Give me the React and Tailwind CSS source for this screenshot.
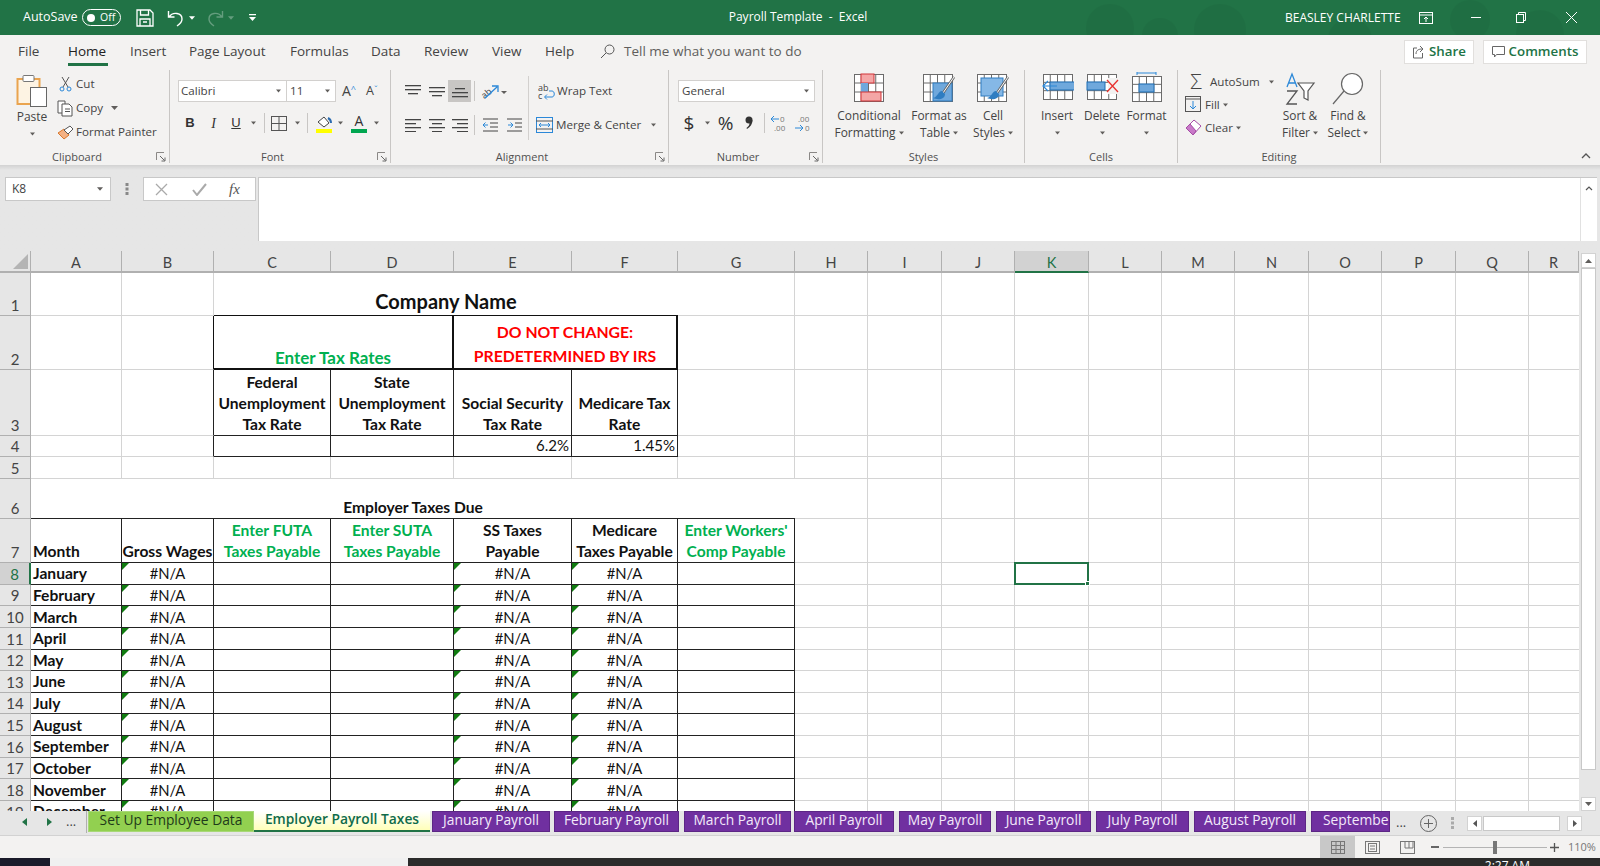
import React from "react";

const Caret = ({ c = "#605e5c", w = 7 }) => (
  <svg width={w} height="4" viewBox="0 0 7 4" className="shrink-0"><path d="M0 0h7L3.5 4z" fill={c} /></svg>
);

const Launcher = () => (
  <svg width="10" height="10" viewBox="0 0 10 10" className="absolute right-[3px] top-[1px]">
    <path d="M.5 8V.5H8" fill="none" stroke="#8a8886" />
    <path d="M4 4l4.5 4.5M9 5.5V9H5.5" fill="none" stroke="#666" />
  </svg>
);

const Lines = ({ rows, color = "#444" }) => (
  <svg width="16" height="14" viewBox="0 0 16 14">
    {rows.map((r, i) => (
      <rect key={i} x={r[0]} y={r[1]} width={r[2]} height="1.3" fill={color} />
    ))}
  </svg>
);

const TableIcon = ({ children, w = 32, h = 26 }) => (
  <svg width={w} height={h + 8} viewBox={`0 0 ${w} ${h + 8}`}>
    <g transform="translate(1 6)">
      {children}
    </g>
  </svg>
);
const GridLines = ({ w = 28, h = 22 }) => (
  <g stroke="#6b6b6b" strokeWidth="1" fill="none">
    <rect x=".5" y=".5" width={w} height={h} fill="#fff" />
    <path d={`M${w * 0.25} 0v${h}M${w * 0.5} 0v${h}M${w * 0.75} 0v${h}M0 ${h / 3}h${w}M0 ${(2 * h) / 3}h${w}`} />
  </g>
);
const Brush = () => (
  <g>
    <path d="M31 3L20 19" stroke="#666" strokeWidth="2.6" />
    <path d="M31 3L20 19" stroke="#fff" strokeWidth="1" />
    <path d="M19 17c-4 0-4 6-9 7 4 2 12 2 12-4z" fill="#2f7dc1" />
  </g>
);

const Group = ({ w, label, launcher, children }) => (
  <div className={`${w} flex h-[93px] shrink-0 flex-col border-r border-[#c8c6c4]`}>
    <div className="flex min-h-0 flex-1">{children}</div>
    <div className={`relative h-[12px] text-center text-[11px] leading-[12px] text-[#505050] ${launcher ? "pr-[15px]" : ""}`}>
      {label}
      {launcher && <Launcher />}
    </div>
  </div>
);

const SmallBtn = ({ icon, text, caret }) => (
  <div className="flex h-[24px] items-center whitespace-nowrap">
    <span className="flex w-[18px] justify-center">{icon}</span>
    <span className="ml-[2px]">{text}</span>
    {caret && <span className="ml-[8px]"><Caret /></span>}
  </div>
);

const BigBtn = ({ w, icon, l1, l2 }) => (
  <div className={`${w} flex shrink-0 flex-col items-center whitespace-nowrap text-[11.9px] leading-[17px]`}>
    <div className="mt-[2px] flex h-[34px] items-center justify-center">{icon}</div>
    <div className="mt-[1px]">{l1}</div>
    <div className="flex h-[17px] items-center gap-[3px]">
      {l2 && <span>{l2}</span>}
      <Caret w={5} />
    </div>
  </div>
);

const IconCell = ({ w, children }) => (
  <div className={`${w} flex h-[22px] shrink-0 items-center justify-center`}>{children}</div>
);
const VSep = ({ w }) => (
  <div className={`${w} flex h-[22px] shrink-0 items-center justify-center`}>
    <div className="h-[20px] w-px bg-[#c8c6c4]" />
  </div>
);

const Tab = ({ label, w, cls }) => (
  <div className={`${w} flex h-[21px] shrink-0 items-center justify-center overflow-hidden whitespace-nowrap pb-[2px] text-[13.8px] ${cls}`}>
    {label}
  </div>
);
const Purple = ({ label, w, ml = "ml-[4px]" }) => (
  <Tab label={label} w={`${w} ${ml}`} cls="bg-[#7030a0] text-[#f3e9fa] border border-[#5c2685]" />
);

const TitleBar = () => (
  <div className="relative flex h-[35px] shrink-0 items-center overflow-hidden bg-[#217346] text-[12px] text-white">
    <svg className="absolute left-[1050px] top-0" width="550" height="35" viewBox="0 0 550 35">
      <g fill="#000" opacity=".035">
        <circle cx="60" cy="28" r="24" /><circle cx="110" cy="36" r="18" /><circle cx="170" cy="30" r="26" />
        <circle cx="300" cy="40" r="22" /><circle cx="420" cy="20" r="20" /><circle cx="490" cy="34" r="24" />
      </g>
    </svg>
    <div className="relative flex w-[700px] shrink-0 items-center pl-[23px]">
      <span className="w-[59px] text-[12.5px]">AutoSave</span>
      <div className="flex h-[17px] w-[39px] items-center rounded-full border border-white pl-[4px] text-[10.5px]">
        <span className="h-[8px] w-[8px] rounded-full bg-white" />
        <span className="ml-[5px]">Off</span>
      </div>
      <svg className="ml-[15px]" width="18" height="18" viewBox="0 0 18 18" fill="none" stroke="#fff" strokeWidth="1.3">
        <path d="M1 1h13l3 3v13H1z" /><path d="M4.5 1v5h8V1M4 17v-7h10v7M7 13h4" />
      </svg>
      <svg className="ml-[13px]" width="18" height="18" viewBox="0 0 18 18" fill="none" stroke="#fff" strokeWidth="1.4">
        <path d="M1.5 2v6h6M2 8c4-6 13-4 13 2 0 3-2 5-5 7" />
      </svg>
      <span className="ml-[4px]"><Caret c="#fff" w={6} /></span>
      <svg className="ml-[11px] opacity-30" width="18" height="18" viewBox="0 0 18 18" fill="none" stroke="#fff" strokeWidth="1.4">
        <path d="M16.5 2v6h-6M16 8C12 2 3 4 3 10c0 3 2 5 5 7" />
      </svg>
      <span className="ml-[4px] opacity-30"><Caret c="#fff" w={6} /></span>
      <svg className="ml-[15px]" width="7" height="7" viewBox="0 0 7 7" fill="#fff"><path d="M0 0h7v1.2H0zM0 3h7L3.5 7z" /></svg>
    </div>
    <div className="relative w-[194px] shrink-0 whitespace-pre pb-[2px] pl-[2px] text-center text-[12px]">Payroll Template  -  Excel</div>
    <div className="relative ml-[391px] w-[134px] shrink-0 whitespace-nowrap text-[12px]">BEASLEY CHARLETTE</div>
    <svg className="relative shrink-0" width="14" height="12" viewBox="0 0 14 12" fill="none" stroke="#fff">
      <rect x=".5" y=".5" width="13" height="11" /><path d="M0 3h14M7 10V5M5 7l2-2 2 2" />
    </svg>
    <div className="relative ml-[38px] h-px w-[10px] shrink-0 bg-white" />
    <svg className="relative ml-[35px] shrink-0" width="10" height="11" viewBox="0 0 10 11" fill="none" stroke="#fff">
      <rect x=".5" y="2.5" width="7" height="8" /><path d="M2.5 2V.5h7v8H8" />
    </svg>
    <svg className="relative ml-[40px] shrink-0" width="11" height="11" viewBox="0 0 11 11" stroke="#fff"><path d="M0 0l11 11M11 0L0 11" /></svg>
  </div>
);

const TabRow = () => {
  const items = [
    ["File", "w-[50px]"], ["Insert", "w-[59px]"], ["Page Layout", "w-[101px]"], ["Formulas", "w-[81px]"],
    ["Data", "w-[53px]"], ["Review", "w-[68px]"], ["View", "w-[53px]"], ["Help", "w-[55px]"],
  ];
  const Item = ([t, w]) => <div key={t} className={`${w} shrink-0`}>{t}</div>;
  return (
    <div className="flex h-[33px] shrink-0 items-center bg-[#f3f2f1] pl-[18px] text-[13.5px] text-[#444]">
      {Item(items[0])}
      <div className="relative w-[62px] shrink-0 font-medium text-[#222]">
        Home
        <div className="absolute left-0 top-[22px] h-[3px] w-[40px] bg-[#217346]" />
      </div>
      {items.slice(1).map(Item)}
      <svg className="mr-[9px] shrink-0" width="15" height="15" viewBox="0 0 15 15" fill="none" stroke="#555">
        <circle cx="9.5" cy="5.5" r="4.5" /><path d="M6 9l-5 5" />
      </svg>
      <div className="text-[#605e5c]">Tell me what you want to do</div>
      <div className="ml-auto flex h-[24px] w-[70px] items-center justify-center gap-[3px] border border-[#e1dfdd] bg-white text-[13.3px] font-semibold text-[#217346]">
        <svg width="14" height="14" viewBox="0 0 14 14" fill="none" stroke="#666"><path d="M5 3H1.5v10h9V8M4 9c0-4 3-5 6-5M8 1l3 3-3 3" /></svg>
        Share
      </div>
      <div className="ml-[9px] mr-[13px] flex h-[24px] w-[104px] items-center justify-center gap-[4px] border border-[#e1dfdd] bg-white text-[13.3px] font-semibold text-[#217346]">
        <svg width="13" height="13" viewBox="0 0 13 13" fill="none" stroke="#666"><path d="M.5 1.5h12v8h-8l-2 2.5v-2.5h-2z" /></svg>
        Comments
      </div>
    </div>
  );
};

const Ribbon = () => (
  <div className="flex h-[97px] shrink-0 items-start bg-[#f3f2f1] pt-[2px] text-[11.6px] text-[#444]">
    <Group w="w-[170px]" label="Clipboard" launcher>
      <div className="ml-[14px] flex w-[36px] shrink-0 flex-col items-center">
        <svg className="mt-[4px]" width="32" height="34" viewBox="0 0 32 34" fill="none">
          <rect x="1.5" y="5" width="22" height="25" fill="#fdf3e3" stroke="#eaa44f" strokeWidth="2" />
          <rect x="7" y="1.5" width="11" height="6" rx="1" fill="#fff" stroke="#777" />
          <rect x="14.5" y="13.5" width="16" height="19" fill="#fff" stroke="#666" />
        </svg>
        <div className="mt-[1px] text-[12px] leading-[16px]">Paste</div>
        <div className="mt-[7px]"><Caret w={5} /></div>
      </div>
      <div className="ml-[6px] flex flex-col pt-[2px]">
        <SmallBtn text="Cut" icon={
          <svg width="13" height="16" viewBox="0 0 13 16" fill="none" stroke="#555"><path d="M3 1l6 10M10 1L4 11" /><circle cx="3" cy="13" r="2" stroke="#2b88d8" /><circle cx="10" cy="13" r="2" stroke="#2b88d8" /></svg>
        } />
        <SmallBtn text="Copy" caret icon={
          <svg width="17" height="17" viewBox="0 0 17 17" fill="#fff" stroke="#555"><path d="M1 1h7v12H1z" /><path d="M5 4h7l3 3v9H5z" /><path d="M8 9h5M8 11.5h5" /></svg>
        } />
        <SmallBtn text="Format Painter" icon={
          <svg width="17" height="15" viewBox="0 0 17 15" fill="none"><path d="M1 8l6-4 5 6-5 4z" fill="#f4b183" stroke="#d8772b" /><path d="M7 5l6-4 3 3-5 5z" fill="#fff" stroke="#555" /></svg>
        } />
      </div>
    </Group>

    <Group w="w-[221px]" label="Font" launcher>
      <div className="ml-[8px] flex flex-col pt-[10px]">
        <div className="flex h-[22px] items-center">
          <div className="flex h-[22px] w-[109px] items-center justify-between border border-[#d2d0ce] bg-white pl-[2px] pr-[5px] text-[#444]">Calibri<Caret w={5} /></div>
          <div className="ml-[-1px] flex h-[22px] w-[50px] items-center justify-between border border-[#d2d0ce] bg-white pl-[3px] pr-[5px]">11<Caret w={5} /></div>
          <div className="ml-[6px] w-[24px] text-[14px] leading-none">A<sup className="text-[9px] text-[#2b88d8]">^</sup></div>
          <div className="text-[12.5px] leading-none">A<span className="align-top text-[9px] text-[#2b88d8]">ˇ</span></div>
        </div>
        <div className="mt-[10px] flex h-[22px] items-center">
          <IconCell w="w-[24px]"><span className="font-['Liberation_Sans',sans-serif] text-[13px] font-bold text-[#333]">B</span></IconCell>
          <IconCell w="w-[23px]"><span className="font-['Liberation_Serif',serif] text-[14px] italic text-[#333]">I</span></IconCell>
          <IconCell w="w-[22px]"><span className="font-['Liberation_Sans',sans-serif] text-[13px] text-[#333] underline">U</span></IconCell>
          <IconCell w="w-[13px]"><Caret w={5} /></IconCell>
          <VSep w="w-[8px]" />
          <IconCell w="w-[22px]">
            <svg width="16" height="15" viewBox="0 0 16 15" fill="none" stroke="#555"><rect x=".5" y=".5" width="15" height="14" /><path d="M8 0v15M0 7.5h16" /></svg>
          </IconCell>
          <IconCell w="w-[14px]"><Caret w={5} /></IconCell>
          <VSep w="w-[6px]" />
          <IconCell w="w-[28px]">
            <svg width="17" height="19" viewBox="0 0 17 19" fill="none">
              <path d="M2 8l6-5 5 6-5 4z" fill="#fff" stroke="#444" /><path d="M12 4c2 1 3 3 3 5" stroke="#2b6cb0" strokeWidth="2" />
              <rect x="0" y="15" width="16" height="4" fill="#ffff00" />
            </svg>
          </IconCell>
          <IconCell w="w-[4px]"><Caret w={5} /></IconCell>
          <IconCell w="ml-[6px] w-[22px]">
            <div className="flex flex-col items-center leading-none">
              <span className="text-[14px] leading-[14px] text-[#333]">A</span>
              <div className="mt-[1px] h-[4px] w-[16px] bg-[#00a650]" />
            </div>
          </IconCell>
          <IconCell w="w-[12px]"><Caret w={5} /></IconCell>
        </div>
      </div>
    </Group>

    <Group w="w-[278px]" label="Alignment" launcher>
      <div className="ml-[10px] flex w-[127px] shrink-0 flex-col pt-[10px]">
        <div className="flex h-[22px] items-center">
          <IconCell w="w-[24px]"><Lines rows={[[0, 1, 16], [0, 5, 16], [3, 9, 10]]} /></IconCell>
          <IconCell w="w-[23px]"><Lines rows={[[0, 3, 16], [0, 7, 16], [3, 11, 10]]} /></IconCell>
          <IconCell w="w-[23px] bg-[#c8c6c4]"><Lines rows={[[3, 4, 10], [0, 8, 16], [0, 12, 16]]} /></IconCell>
          <VSep w="w-[6px]" />
          <IconCell w="w-[34px]">
            <svg width="26" height="16" viewBox="0 0 26 16" fill="none">
              <text x="0" y="13" fontSize="9" fill="#444" fontFamily="Open Sans" transform="rotate(-40 6 10)">ab</text>
              <path d="M4 15L16 4M11 3h6v6" stroke="#2b88d8" strokeWidth="1.3" />
              <path d="M20 8h6l-3 3z" fill="#605e5c" />
            </svg>
          </IconCell>
        </div>
        <div className="mt-[12px] flex h-[22px] items-center">
          <IconCell w="w-[24px]"><Lines rows={[[0, 1, 16], [0, 5, 11], [0, 9, 16], [0, 13, 11]]} /></IconCell>
          <IconCell w="w-[23px]"><Lines rows={[[0, 1, 16], [3, 5, 10], [0, 9, 16], [3, 13, 10]]} /></IconCell>
          <IconCell w="w-[23px]"><Lines rows={[[0, 1, 16], [5, 5, 11], [0, 9, 16], [5, 13, 11]]} /></IconCell>
          <VSep w="w-[6px]" />
          <IconCell w="w-[26px]">
            <svg width="16" height="14" viewBox="0 0 16 14" fill="none"><path d="M1 1h15M8 5h8M8 9h8M1 13h15" stroke="#444" /><path d="M6 7H1M3.5 4.5L1 7l2.500 2.500" stroke="#2b88d8" /></svg>
          </IconCell>
          <IconCell w="w-[23px]">
            <svg width="16" height="14" viewBox="0 0 16 14" fill="none"><path d="M0 1h15M8 5h7M8 9h7M0 13h15" stroke="#444" /><path d="M1 7h5M3.500 4.500L6 7 3.500 9.500" stroke="#2b88d8" /></svg>
          </IconCell>
        </div>
      </div>
      <div className="mt-[6px] h-[64px] w-px shrink-0 bg-[#d2d0ce]" />
      <div className="ml-[7px] flex flex-col whitespace-nowrap pt-[9px]">
        <div className="flex h-[24px] items-center pl-[2px]">
          <svg width="17" height="17" viewBox="0 0 17 17" fill="none">
            <text x="0" y="8" fontSize="9" fill="#444" fontFamily="Open Sans">ab</text>
            <text x="0" y="16" fontSize="9" fill="#444" fontFamily="Open Sans">c</text>
            <path d="M11 8h3c3 0 3 6 0 6H7M9 11.500L6.500 14 9 16.500" stroke="#2b88d8" />
          </svg>
          <span className="ml-[2px]">Wrap Text</span>
        </div>
        <div className="mt-[10px] flex h-[24px] items-center">
          <svg width="17" height="16" viewBox="0 0 17 16" fill="none" stroke="#555">
            <rect x=".5" y=".5" width="16" height="15" stroke="#2b88d8" />
            <path d="M0 4h17M0 12h17" /><path d="M3 8h11M5 6L3 8l2 2M12 6l2 2-2 2" stroke="#2b88d8" />
          </svg>
          <span className="ml-[3px]">Merge &amp; Center</span>
          <span className="ml-[10px]"><Caret w={5} /></span>
        </div>
      </div>
    </Group>

    <Group w="w-[154px]" label="Number" launcher>
      <div className="ml-[9px] flex flex-col pt-[10px]">
        <div className="flex h-[22px] w-[137px] items-center justify-between border border-[#d2d0ce] bg-white pl-[3px] pr-[5px]">General<Caret w={5} /></div>
        <div className="mt-[10px] flex h-[22px] items-center">
          <IconCell w="w-[22px]"><span className="text-[19px] leading-none text-[#333]">$</span></IconCell>
          <IconCell w="w-[14px]"><Caret w={5} /></IconCell>
          <IconCell w="w-[23px]"><span className="text-[19px] leading-none text-[#333]">%</span></IconCell>
          <IconCell w="w-[24px]">
            <svg width="8" height="14" viewBox="0 0 8 14" fill="#333"><circle cx="4" cy="4" r="3.5" /><path d="M7.500 4c0 4-2 7-5.500 9l-.5-1c2-1.500 3-3 3-5z" /></svg>
          </IconCell>
          <VSep w="w-[6px]" />
          <IconCell w="w-[23px]">
            <svg width="18" height="17" viewBox="0 0 18 17" fill="none"><path d="M9 4H1M4 1L1 4l3 3" stroke="#2b88d8" /><text x="10" y="7" fontSize="8" fill="#777" fontFamily="Open Sans">0</text><text x="4" y="16" fontSize="8" fill="#777" fontFamily="Open Sans">.00</text></svg>
          </IconCell>
          <IconCell w="w-[25px]">
            <svg width="18" height="17" viewBox="0 0 18 17" fill="none"><text x="4" y="7" fontSize="8" fill="#777" fontFamily="Open Sans">.00</text><path d="M1 13h8M6 10l3 3-3 3" stroke="#2b88d8" /><text x="11" y="16" fontSize="8" fill="#777" fontFamily="Open Sans">0</text></svg>
          </IconCell>
        </div>
      </div>
    </Group>

    <Group w="w-[202px]" label="Styles">
      <BigBtn w="w-[92px]" l1="Conditional" l2="Formatting" icon={
        <TableIcon w={32} h={26}>
          <g transform="translate(0 -4)">
            <GridLines w={29} h={27} />
            <rect x="7" y="0" width="13" height="9" fill="#f4a6a6" stroke="#d13438" />
            <rect x="7" y="9" width="7" height="9" fill="#6fa8dc" />
            <rect x="7" y="18" width="20" height="9" fill="#f4a6a6" stroke="#d13438" />
          </g>
        </TableIcon>
      } />
      <BigBtn w="w-[48px]" l1="Format as" l2="Table" icon={
        <TableIcon w={34} h={26}>
          <g transform="translate(0 -4)">
            <GridLines w={29} h={27} />
            <rect x="10" y="9" width="19" height="18" fill="#6fa8dc" stroke="#2f7dc1" />
            <Brush />
          </g>
        </TableIcon>
      } />
      <BigBtn w="w-[60px]" l1="Cell" l2="Styles" icon={
        <TableIcon w={34} h={26}>
          <g transform="translate(0 -4)">
            <GridLines w={29} h={27} />
            <rect x="4" y="4" width="22" height="18" fill="#85b8e6" stroke="#2f7dc1" />
            <Brush />
          </g>
        </TableIcon>
      } />
    </Group>

    <Group w="w-[153px]" label="Cells">
      <BigBtn w="w-[64px]" l1="Insert" icon={
        <TableIcon w={33} h={26}>
          <g transform="translate(1 -4)">
            <GridLines w={29} h={25} />
            <rect x="7" y="8" width="25" height="8" fill="#6fa8dc" stroke="#1f6fb5" />
            <path d="M14 12H0M5 7l-5 5 5 5" fill="none" stroke="#2b88d8" strokeWidth="1.2" />
          </g>
        </TableIcon>
      } />
      <BigBtn w="w-[26px]" l1="Delete" icon={
        <TableIcon w={33} h={26}>
          <g transform="translate(0 -4)">
            <GridLines w={29} h={25} />
            <rect x="0" y="8" width="18" height="8" fill="#6fa8dc" stroke="#1f6fb5" />
            <rect x="21" y="4" width="11" height="16" fill="#f3f2f1" />
            <path d="M20 6l11 12M31 6L20 18" stroke="#e8312f" strokeWidth="1.3" />
          </g>
        </TableIcon>
      } />
      <BigBtn w="w-[63px]" l1="Format" icon={
        <TableIcon w={32} h={26}>
          <g transform="translate(0 -2)">
            <path d="M5 -3h19M5 -5v4M24 -5v4" stroke="#2b88d8" fill="none" />
            <GridLines w={29} h={25} />
            <rect x="7" y="8" width="15" height="8" fill="#6fa8dc" stroke="#1f6fb5" />
          </g>
        </TableIcon>
      } />
    </Group>

    <Group w="w-[203px]" label="Editing">
      <div className="ml-[7px] flex w-[91px] shrink-0 flex-col">
        <div className="flex h-[23px] items-center">
          <span className="flex w-[22px] justify-center text-[21px] font-light leading-none text-[#444]">Σ</span>
          <span className="ml-[3px]">AutoSum</span><span className="ml-[9px]"><Caret w={5} /></span>
        </div>
        <div className="flex h-[23px] items-center">
          <svg width="17" height="17" viewBox="0 0 17 17" fill="none"><rect x=".5" y=".5" width="15" height="15" stroke="#555" /><path d="M0 3h16" stroke="#555" /><path d="M8 5v8M5 10l3 3 3-3" stroke="#2b88d8" /></svg>
          <span className="ml-[3px]">Fill</span><span className="ml-[3px]"><Caret w={5} /></span>
        </div>
        <div className="flex h-[23px] items-center">
          <svg width="17" height="17" viewBox="0 0 17 17" fill="none"><path d="M1 9l8-8 7 6-8 9z" fill="#fff" stroke="#a64ca6" /><path d="M1 9l4-4 6 7-3 4z" fill="#c879c8" stroke="#a64ca6" /></svg>
          <span className="ml-[3px]">Clear</span><span className="ml-[3px]"><Caret w={5} /></span>
        </div>
      </div>
      <BigBtn w="w-[48px]" l1="Sort &" l2="Filter" icon={
        <svg width="31" height="34" viewBox="0 0 31 34" fill="none">
          <path d="M2 15L7 2l5 13M4 11h6" stroke="#2b88d8" strokeWidth="1.3" />
          <path d="M2 19h10L2 32h10" stroke="#555" strokeWidth="1.3" />
          <path d="M13 11h16l-6 8v9l-4-2v-7z" stroke="#555" strokeWidth="1.2" fill="#fff" />
        </svg>
      } />
      <BigBtn w="w-[48px]" l1="Find &" l2="Select" icon={
        <svg width="32" height="34" viewBox="0 0 32 34" fill="none" stroke="#666" strokeWidth="1.2">
          <circle cx="20" cy="12" r="10.5" fill="#fff" /><path d="M12 19L1 32" />
        </svg>
      } />
    </Group>
  </div>
);

const RibbonChevron = () => (
  <svg className="absolute right-[9px] top-[153px]" width="10" height="6" viewBox="0 0 10 6" fill="none" stroke="#555" strokeWidth="1.3"><path d="M1 5l4-4 4 4" /></svg>
);

const FormulaBar = () => (
  <div className="flex h-[86px] shrink-0 items-start bg-[#e6e6e6] bg-gradient-to-b from-[#d2d2d2] to-[#e6e6e6] to-[5px] pl-[5px] pt-[12px]">
    <div className="flex h-[24px] w-[106px] shrink-0 items-center justify-between border border-[#c8c8c8] bg-white pl-[6px] pr-[7px] text-[12px] text-[#444]">
      K8<Caret w={6} />
    </div>
    <div className="flex h-[24px] w-[32px] shrink-0 items-center justify-center">
      <svg width="4" height="12" viewBox="0 0 4 12" fill="#888"><rect width="3" height="3" x=".5" /><rect width="3" height="3" x=".5" y="4.500" /><rect width="3" height="3" x=".5" y="9" /></svg>
    </div>
    <div className="flex h-[24px] w-[113px] shrink-0 items-center border border-[#c8c8c8] bg-white">
      <svg className="ml-[11px]" width="13" height="13" viewBox="0 0 13 13" stroke="#aaa" strokeWidth="1.300"><path d="M1 1l11 11M12 1L1 12" /></svg>
      <svg className="ml-[24px]" width="15" height="13" viewBox="0 0 15 13" fill="none" stroke="#aaa" strokeWidth="2"><path d="M1 7l4 5 9-11" /></svg>
      <span className="ml-[22px] font-['Liberation_Serif',serif] text-[15px] italic text-[#555]">fx</span>
    </div>
    <div className="ml-[2px] flex h-[64px] w-[1339px] justify-end border-l border-t border-[#c8c8c8] bg-white">
      <div className="w-[17px] border-l border-[#e1e1e1] pl-[4px] pt-[8px]">
        <svg width="8" height="5" viewBox="0 0 8 5" fill="none" stroke="#555" strokeWidth="1.200"><path d="M1 4l3-3 3 3" /></svg>
      </div>
    </div>
  </div>
);

const months = ["January", "February", "March", "April", "May", "June", "July", "August", "September", "October", "November", "December"];
const colLetters = ["A", "B", "C", "D", "E", "F", "G", "H", "I", "J", "K", "L", "M", "N", "O", "P", "Q", "R"];

const Blank = ({ cls = "", children }) => (
  <div className={`relative min-w-0 border-b border-r border-[#d4d4d4] ${cls}`}>{children}</div>
);

const RowHead = ({ n, active }) => (
  <div className={`flex items-end justify-center border-b border-r border-[#b0b0b0] pb-[1px] text-[15px] leading-[18px] ${active ? "bg-[#d2d2d2] text-[#217346] border-r-2 border-r-[#217346]" : "bg-[#e6e6e6] text-[#444]"}`}>{n}</div>
);

const Tail = ({ selected }) =>
  Array.from({ length: 10 }).map((_, i) => (
    <Blank key={i}>
      {selected && i === 3 && (
        <div className="absolute -left-px -top-px bottom-[-1px] right-[-1px] z-10 border-2 border-[#217346]">
          <div className="absolute -bottom-[3px] -right-[3px] h-[5px] w-[5px] border border-white bg-[#217346]" />
        </div>
      )}
    </Blank>
  ));

const Tri = () => (
  <span className="absolute left-0 top-0 h-0 w-0 border-r-[7px] border-t-[7px] border-r-transparent border-t-[#107c10]" />
);

const Sheet = () => (
  <div className="grid h-[560px] w-[1579px] shrink-0 grid-cols-[31px_91px_92px_117px_123px_118px_106px_117px_73px_74px_73px_74px_73px_73px_74px_73px_74px_73px_50px] grid-rows-[22px_43px_54px_66px_21px_22px_40px_44px_repeat(12,21.64px)] overflow-hidden bg-white font-['Lato',sans-serif] text-[15.6px] leading-[21px] text-[#111]">
    {/* header */}
    <div className="relative border-b-2 border-r border-[#b0b0b0] bg-[#e6e6e6]">
      <svg className="absolute bottom-[2px] right-[2px]" width="15" height="15" viewBox="0 0 15 15"><path d="M15 0v15H0z" fill="#b4b4b4" /></svg>
    </div>
    {colLetters.map((c) => (
      <div key={c} className={`flex items-center justify-center border-r border-[#b0b0b0] pt-[2px] text-[14.5px] ${c === "K" ? "border-b-2 border-b-[#217346] bg-[#d2d2d2] text-[#217346]" : "border-b-2 border-b-[#b0b0b0] bg-[#e6e6e6] text-[#444]"}`}>{c}</div>
    ))}

    {/* row 1 */}
    <RowHead n={1} />
    <Blank /><Blank />
    <div className="col-span-4 flex items-end justify-center border-b border-[#111] pb-[3px] text-[20px] font-bold">Company Name</div>
    <Blank />
    <Tail />
    <Blank cls="border-r-0" />

    {/* row 2 */}
    <RowHead n={2} />
    <Blank /><Blank cls="border-r-[#111]" />
    <div className="col-span-2 flex items-end justify-center border-b-2 border-r-2 border-[#111] text-[17px] font-bold text-[#00b050]">Enter Tax Rates</div>
    <div className="col-span-2 flex flex-col items-center justify-end border-b-2 border-r-2 border-[#111] text-[15.8px] font-bold leading-[24px] text-[#ff0000]">
      <div>DO NOT CHANGE:</div>
      <div>PREDETERMINED BY IRS</div>
    </div>
    <Blank />
    <Tail />
    <Blank cls="border-r-0" />

    {/* row 3 */}
    <RowHead n={3} />
    <Blank /><Blank cls="border-r-[#222]" />
    <div className="flex flex-col items-center justify-end border-b border-r border-[#222] whitespace-nowrap font-bold"><div>Federal</div><div>Unemployment</div><div>Tax Rate</div></div>
    <div className="flex flex-col items-center justify-end border-b border-r border-[#222] whitespace-nowrap font-bold"><div>State</div><div>Unemployment</div><div>Tax Rate</div></div>
    <div className="flex flex-col items-center justify-end border-b border-r border-[#222] whitespace-nowrap font-bold"><div>Social Security</div><div>Tax Rate</div></div>
    <div className="flex flex-col items-center justify-end border-b border-r border-[#222] whitespace-nowrap font-bold"><div>Medicare Tax</div><div>Rate</div></div>
    <Blank />
    <Tail />
    <Blank cls="border-r-0" />

    {/* row 4 */}
    <RowHead n={4} />
    <Blank /><Blank cls="border-r-[#222]" />
    <div className="border-b border-r border-[#222]" />
    <div className="border-b border-r border-[#222]" />
    <div className="flex items-end justify-end border-b border-r border-[#222] pr-[2px] text-[15px]">6.2%</div>
    <div className="flex items-end justify-end border-b border-r border-[#222] pr-[2px] text-[15px]">1.45%</div>
    <Blank />
    <Tail />
    <Blank cls="border-r-0" />

    {/* row 5 */}
    <RowHead n={5} />
    {Array.from({ length: 7 }).map((_, i) => <Blank key={i} />)}
    <Tail />
    <Blank cls="border-r-0" />

    {/* row 6 */}
    <RowHead n={6} />
    <div className="col-span-7 flex items-end justify-center border-b border-[#222] font-bold">Employer Taxes Due</div>
    <Tail />
    <Blank cls="border-r-0" />

    {/* row 7 */}
    <RowHead n={7} />
    <div className="flex items-end border-b border-r border-[#222] pl-[2px] font-bold">Month</div>
    <div className="flex items-end justify-center whitespace-nowrap border-b border-r border-[#222] font-bold">Gross Wages</div>
    <div className="flex flex-col items-center justify-end whitespace-nowrap border-b border-r border-[#222] font-bold text-[#00b050]"><div>Enter FUTA</div><div>Taxes Payable</div></div>
    <div className="flex flex-col items-center justify-end whitespace-nowrap border-b border-r border-[#222] font-bold text-[#00b050]"><div>Enter SUTA</div><div>Taxes Payable</div></div>
    <div className="flex flex-col items-center justify-end whitespace-nowrap border-b border-r border-[#222] font-bold"><div>SS Taxes</div><div>Payable</div></div>
    <div className="flex flex-col items-center justify-end whitespace-nowrap border-b border-r border-[#222] font-bold"><div>Medicare</div><div>Taxes Payable</div></div>
    <div className="flex flex-col items-center justify-end whitespace-nowrap border-b border-r border-[#222] font-bold text-[#00b050]"><div>Enter Workers'</div><div>Comp Payable</div></div>
    <Tail />
    <Blank cls="border-r-0" />

    {/* months */}
    {months.map((m, i) => (
      <React.Fragment key={m}>
        <RowHead n={i + 8} active={i === 0} />
        <div className="flex items-center border-b border-r border-[#222] pl-[2px] pt-[1px] font-bold">{m}</div>
        <div className="relative flex items-center justify-center border-b border-r border-[#222] pt-[1px] text-[14.8px]"><Tri />#N/A</div>
        <div className="border-b border-r border-[#222]" />
        <div className="border-b border-r border-[#222]" />
        <div className="relative flex items-center justify-center border-b border-r border-[#222] pt-[1px] text-[14.8px]"><Tri />#N/A</div>
        <div className="relative flex items-center justify-center border-b border-r border-[#222] pt-[1px] text-[14.8px]"><Tri />#N/A</div>
        <div className="border-b border-r border-[#222]" />
        <Tail selected={i === 0} />
        <Blank cls="border-r-0" />
      </React.Fragment>
    ))}
  </div>
);

const Scrollbar = () => (
  <div className="ml-[2px] flex h-[560px] w-[15px] shrink-0 flex-col">
    <div className="mt-[2px] flex h-[15px] items-center justify-center border border-[#d2d2d2] bg-white"><svg width="7" height="4" viewBox="0 0 7 4"><path d="M0 4h7L3.500 0z" fill="#605e5c" /></svg></div>
    <div className="h-[502px] border border-[#c8c8c8] bg-white" />
    <div className="flex-1" />
    <div className="flex h-[14px] items-center justify-center border border-[#d2d2d2] bg-white"><Caret c="#605e5c" w={7} /></div>
  </div>
);

const TabBar = () => (
  <div className="flex h-[24px] shrink-0 items-start bg-[#e6e6e6]">
    <div className="flex h-[22px] w-[87px] shrink-0 items-center border-r border-[#b0b0b0] pl-[22px] text-[13px] text-[#444]">
      <svg width="5" height="8" viewBox="0 0 5 8" fill="#217346"><path d="M5 0v8L0 4z" /></svg>
      <svg className="ml-[20px]" width="5" height="8" viewBox="0 0 5 8" fill="#217346"><path d="M0 0v8l5-4z" /></svg>
      <span className="ml-[14px]">...</span>
    </div>
    <Tab label="Set Up Employee Data" w="ml-px w-[166px]" cls="bg-[#92d050] text-[#1e3a1a] border border-[#a8d878]" />
    <Tab label="Employer Payroll Taxes" w="w-[176px]" cls="bg-gradient-to-b from-white to-[#ffffb8] border-b-2 border-b-[#217346] font-semibold text-[#0f6b4a]" />
    <Purple label="January Payroll" w="w-[118px]" ml="ml-[2px]" />
    <Purple label="February Payroll" w="w-[125px]" />
    <Purple label="March Payroll" w="w-[107px]" ml="ml-[5px]" />
    <Purple label="April Payroll" w="w-[100px]" ml="ml-[3px]" />
    <Purple label="May Payroll" w="w-[92px]" ml="ml-[5px]" />
    <Purple label="June Payroll" w="w-[95px]" ml="ml-[5px]" />
    <Purple label="July Payroll" w="w-[93px]" ml="ml-[5px]" />
    <Purple label="August Payroll" w="w-[112px]" ml="ml-[5px]" />
    <div className="ml-[5px] flex h-[21px] w-[79px] shrink-0 items-center overflow-hidden whitespace-nowrap border border-[#5c2685] bg-[#7030a0] pb-[2px] pl-[11px] text-[13.8px] text-[#f3e9fa]">September Payroll</div>
    <div className="ml-[6px] flex h-[24px] items-center">
      <span className="text-[13px] text-[#444]">...</span>
      <svg className="ml-[14px]" width="17" height="17" viewBox="0 0 17 17" fill="none" stroke="#666"><circle cx="8.500" cy="8.500" r="8" /><path d="M8.500 4v9M4 8.500h9" /></svg>
      <svg className="ml-[14px]" width="3" height="12" viewBox="0 0 3 12" fill="#aaa"><rect width="3" height="3" /><rect width="3" height="3" y="4.500" /><rect width="3" height="3" y="9" /></svg>
      <div className="ml-[13px] flex h-[15px] w-[15px] items-center justify-center border border-[#d2d2d2] bg-white"><svg width="4" height="7" viewBox="0 0 4 7" fill="#555"><path d="M4 0v7L0 3.500z" /></svg></div>
      <div className="ml-px h-[15px] w-[77px] border border-[#c8c8c8] bg-white" />
      <div className="ml-[7px] flex h-[15px] w-[15px] items-center justify-center border border-[#d2d2d2] bg-white"><svg width="4" height="7" viewBox="0 0 4 7" fill="#555"><path d="M0 0v7l4-3.500z" /></svg></div>
    </div>
  </div>
);

const StatusBar = () => (
  <div className="flex h-[23px] shrink-0 items-center border-t border-[#d2d2d2] bg-[#f3f2f1] pl-[1320px] text-[12px] text-[#777]">
    <div className="flex h-[23px] w-[35px] items-center justify-center bg-[#c8c8c8]">
      <svg width="14" height="13" viewBox="0 0 14 13" fill="none" stroke="#777"><rect x=".5" y=".5" width="13" height="12" /><path d="M5 0v13M9.500 0v13M0 4.500h14M0 8.500h14" /></svg>
    </div>
    <div className="flex w-[35px] justify-center">
      <svg width="15" height="13" viewBox="0 0 15 13" fill="none" stroke="#777"><rect x=".5" y=".5" width="14" height="12" /><rect x="3.500" y="2.500" width="8" height="8" /><path d="M5 5h5M5 8h5" /></svg>
    </div>
    <div className="flex w-[35px] justify-center">
      <svg width="15" height="13" viewBox="0 0 15 13" fill="none" stroke="#777"><rect x=".5" y=".5" width="14" height="12" /><path d="M5 0v7h8V0M9 0v7" /></svg>
    </div>
    <div className="ml-[6px] h-[2px] w-[8px] bg-[#666]" />
    <div className="relative ml-[4px] h-px w-[104px] bg-[#b4b4b4]">
      <div className="absolute left-[50px] top-[-6px] h-[13px] w-[4px] bg-[#777]" />
    </div>
    <svg className="ml-[3px]" width="9" height="9" viewBox="0 0 9 9" stroke="#555" strokeWidth="1.300"><path d="M4.500 0v9M0 4.500h9" /></svg>
    <span className="ml-[9px] font-['Open_Sans',sans-serif] text-[11px]">110%</span>
  </div>
);

export default function App() {
  return (
    <div className="relative flex h-[866px] w-[1600px] flex-col overflow-hidden bg-[#e6e6e6] font-['Open_Sans',sans-serif]">
      <TitleBar />
      <TabRow />
      <Ribbon />
      <RibbonChevron />
      <FormulaBar />
      <div className="flex h-[560px] shrink-0">
        <Sheet />
        <Scrollbar />
      </div>
      <TabBar />
      <StatusBar />
      <div className="flex h-[8px] flex-1 overflow-hidden">
        <div className="w-[50px] bg-[#1a1a2a]" />
        <div className="w-[358px] bg-[#f0f0f0]" />
        <div className="flex flex-1 justify-end bg-[#2b2b2b] pr-[70px] text-[12px] leading-[16px] text-white">
          2:27 AM
        </div>
      </div>
    </div>
  );
}
